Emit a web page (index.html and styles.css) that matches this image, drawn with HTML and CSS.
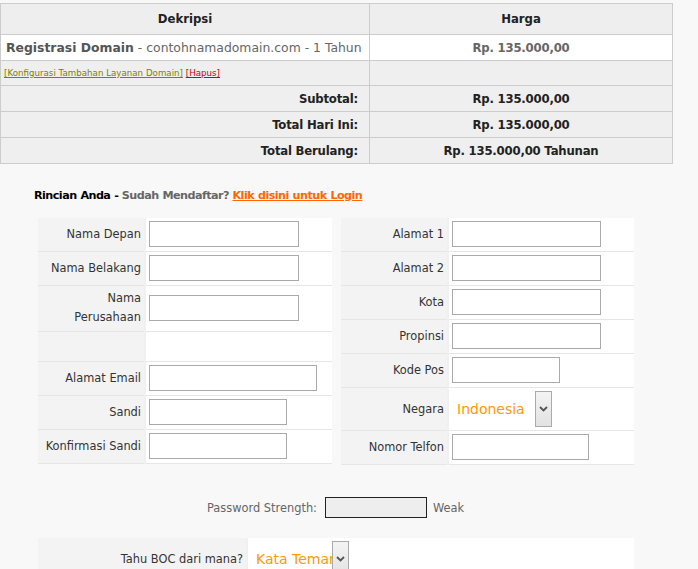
FILE: index.html
```html
<!DOCTYPE html>
<html>
<head>
<meta charset="utf-8">
<link rel="stylesheet" href="styles.css">
</head>
<body>
<table class="cart">
  <thead>
    <tr><th class="c-desc">Dekripsi</th><th class="c-price">Harga</th></tr>
  </thead>
  <tbody>
    <tr class="item">
      <td class="desc"><strong>Registrasi Domain</strong> - contohnamadomain.com - 1 Tahun</td>
      <td class="price">Rp. 135.000,00</td>
    </tr>
    <tr class="links">
      <td class="desc"><a class="cfg" href="#">[Konfigurasi Tambahan Layanan Domain]</a> <a class="del" href="#">[Hapus]</a></td>
      <td></td>
    </tr>
    <tr class="sum">
      <td class="lbl">Subtotal:</td><td class="price">Rp. 135.000,00</td>
    </tr>
    <tr class="sum">
      <td class="lbl">Total Hari Ini:</td><td class="price">Rp. 135.000,00</td>
    </tr>
    <tr class="sum">
      <td class="lbl">Total Berulang:</td><td class="price">Rp. 135.000,00 Tahunan</td>
    </tr>
  </tbody>
</table>

<p class="title"><b class="t1">Rincian Anda -</b> <b class="t2">Sudah Mendaftar?</b> <a class="login" href="#">Klik disini untuk Login</a></p>

<div class="forms">
  <table class="form left">
    <tr><td class="fl">Nama Depan</td><td class="ff"><input class="in w150" type="text"></td></tr>
    <tr><td class="fl">Nama Belakang</td><td class="ff"><input class="in w150" type="text"></td></tr>
    <tr class="tall"><td class="fl">Nama<br>Perusahaan</td><td class="ff"><input class="in w150" type="text"></td></tr>
    <tr class="empty"><td class="fl"></td><td class="ff"></td></tr>
    <tr><td class="fl">Alamat Email</td><td class="ff"><input class="in w168" type="text"></td></tr>
    <tr><td class="fl">Sandi</td><td class="ff"><input class="in w138" type="password"></td></tr>
    <tr><td class="fl">Konfirmasi Sandi</td><td class="ff"><input class="in w138" type="password"></td></tr>
  </table>
  <table class="form right">
    <tr><td class="fl">Alamat 1</td><td class="ff"><input class="in w149" type="text"></td></tr>
    <tr><td class="fl">Alamat 2</td><td class="ff"><input class="in w149" type="text"></td></tr>
    <tr><td class="fl">Kota</td><td class="ff"><input class="in w149" type="text"></td></tr>
    <tr><td class="fl">Propinsi</td><td class="ff"><input class="in w149" type="text"></td></tr>
    <tr><td class="fl">Kode Pos</td><td class="ff"><input class="in w108" type="text"></td></tr>
    <tr class="selrow"><td class="fl">Negara</td><td class="ff">
      <div class="sel sel-country"><span class="sel-text">Indonesia</span><span class="sel-btn"><svg width="9" height="6" viewBox="0 0 9 6"><path d="M1 1 L4.5 4.5 L8 1" fill="none" stroke="#555" stroke-width="1.8"/></svg></span></div>
    </td></tr>
    <tr><td class="fl">Nomor Telfon</td><td class="ff"><input class="in w137" type="text"></td></tr>
  </table>
</div>

<div class="strength">
  <span class="s-label">Password Strength:</span>
  <span class="s-bar"></span>
  <span class="s-val">Weak</span>
</div>

<table class="form bottom">
  <tr><td class="fl">Tahu BOC dari mana?</td><td class="ff">
    <div class="sel sel-ref"><span class="sel-text">Kata Teman</span><span class="sel-btn"><svg width="9" height="6" viewBox="0 0 9 6"><path d="M1 1 L4.5 4.5 L8 1" fill="none" stroke="#555" stroke-width="1.8"/></svg></span></div>
  </td></tr>
</table>
</body>
</html>
```
FILE: styles.css
```css
html, body {
  margin: 0;
  padding: 0;
}
body {
  background: #f8f8f8;
  font-family: "DejaVu Sans", Verdana, sans-serif;
  font-size: 11.4px;
  color: #333;
  padding-top: 3px;
}

.cart {
  width: 673px;
  border-collapse: collapse;
  border: 1px solid #cccccc;
  border-left: 0;
  font-size: 11.7px;
}
.cart th, .cart td {
  border: 1px solid #cccccc;
  padding: 0 5px;
}
.cart th {
  background: #eeeeee;
  height: 30px;
  font-weight: bold;
  color: #222;
  text-align: center;
}
.cart .c-desc { width: 358px; }
.cart td { background: #efefef; height: 24px; }
.cart tr.item td { background: #ffffff; height: 25px; color: #666; }
.cart tr.item .desc { font-size: 12.4px; }
.cart tr.item strong { color: #555; }
.cart tr.item .price { color: #666; }
.cart .price { text-align: center; font-weight: bold; color: #222; letter-spacing: -0.2px; }
.cart .lbl { text-align: right; font-weight: bold; color: #222; padding-right: 11px; letter-spacing: -0.2px; }
.cart tr.sum td { height: 25px; }
.cart tr.links td { height: 24px; }
.cart tr.links .desc { padding-left: 3px; font-size: 8.7px; }
.cfg { color: #808000; }
.del { color: #cc0000; }

.title {
  margin: 25px 0 0 34px;
  font-size: 11.2px;
  line-height: 14px;
  letter-spacing: -0.55px;
  word-spacing: 0.5px;
}
.t1 { color: #000; }
.t2 { color: #666; }
.login { color: #ff6600; font-weight: bold; }

.forms {
  display: flex;
  margin: 15px 0 0 38px;
  gap: 9px;
  align-items: flex-start;
}
.form {
  border-collapse: collapse;
}
.form.left { width: 294px; }
.form.right { width: 293px; }
.form td {
  border-bottom: 1px solid #e6e6e6;
  padding: 3px 3px 4px;
  height: 26px;
}
.form .fl {
  background: #f3f3f3;
  text-align: right;
  width: 100px;
  color: #333;
  border-right: 2px solid #f0f0f0;
  line-height: 19px;
}
.form .ff {
  background: #ffffff;
}
.form tr.tall td { height: 37px; }
.form tr.empty td { height: 22px; }
.form tr.selrow td { height: 36px; padding: 3px 3px 3px; }

.in {
  display: block;
  box-sizing: border-box;
  height: 26px;
  border: 1px solid #aaaaaa;
  background: #fff;
  margin: 0;
}
.w150 { width: 150px; }
.w168 { width: 168px; }
.w138 { width: 138px; }
.w149 { width: 149px; }
.w108 { width: 108px; }
.w137 { width: 137px; }

.sel {
  display: flex;
  align-items: stretch;
  height: 36px;
  overflow: hidden;
}
.sel-text {
  color: #ff9900;
  font-size: 14px;
  line-height: 36px;
  padding-left: 5px;
  white-space: nowrap;
  overflow: hidden;
}
.sel-btn {
  box-sizing: border-box;
  width: 17px;
  border: 1px solid #aaaaaa;
  background: linear-gradient(#f4f4f4, #e2e2e2);
  display: flex;
  align-items: center;
  justify-content: center;
  flex: none;
}
.sel-country .sel-text { width: 78px; }
.sel-ref .sel-text { width: 76px; padding-left: 5px; }

.strength {
  display: flex;
  align-items: center;
  margin: 32px 0 0 207px;
  height: 21px;
  color: #666;
}
.s-label { margin-right: 8px; }
.s-bar {
  box-sizing: border-box;
  width: 102px;
  height: 21px;
  border: 1px solid #222;
  background: #eeeeee;
  margin-right: 6px;
}
.s-val { color: #666; }

.form.bottom {
  margin: 20px 0 0 38px;
  width: 596px;
}
.form.bottom .fl { width: 202px; }
.form.bottom td { border-bottom: 0; height: 36px; }
```
